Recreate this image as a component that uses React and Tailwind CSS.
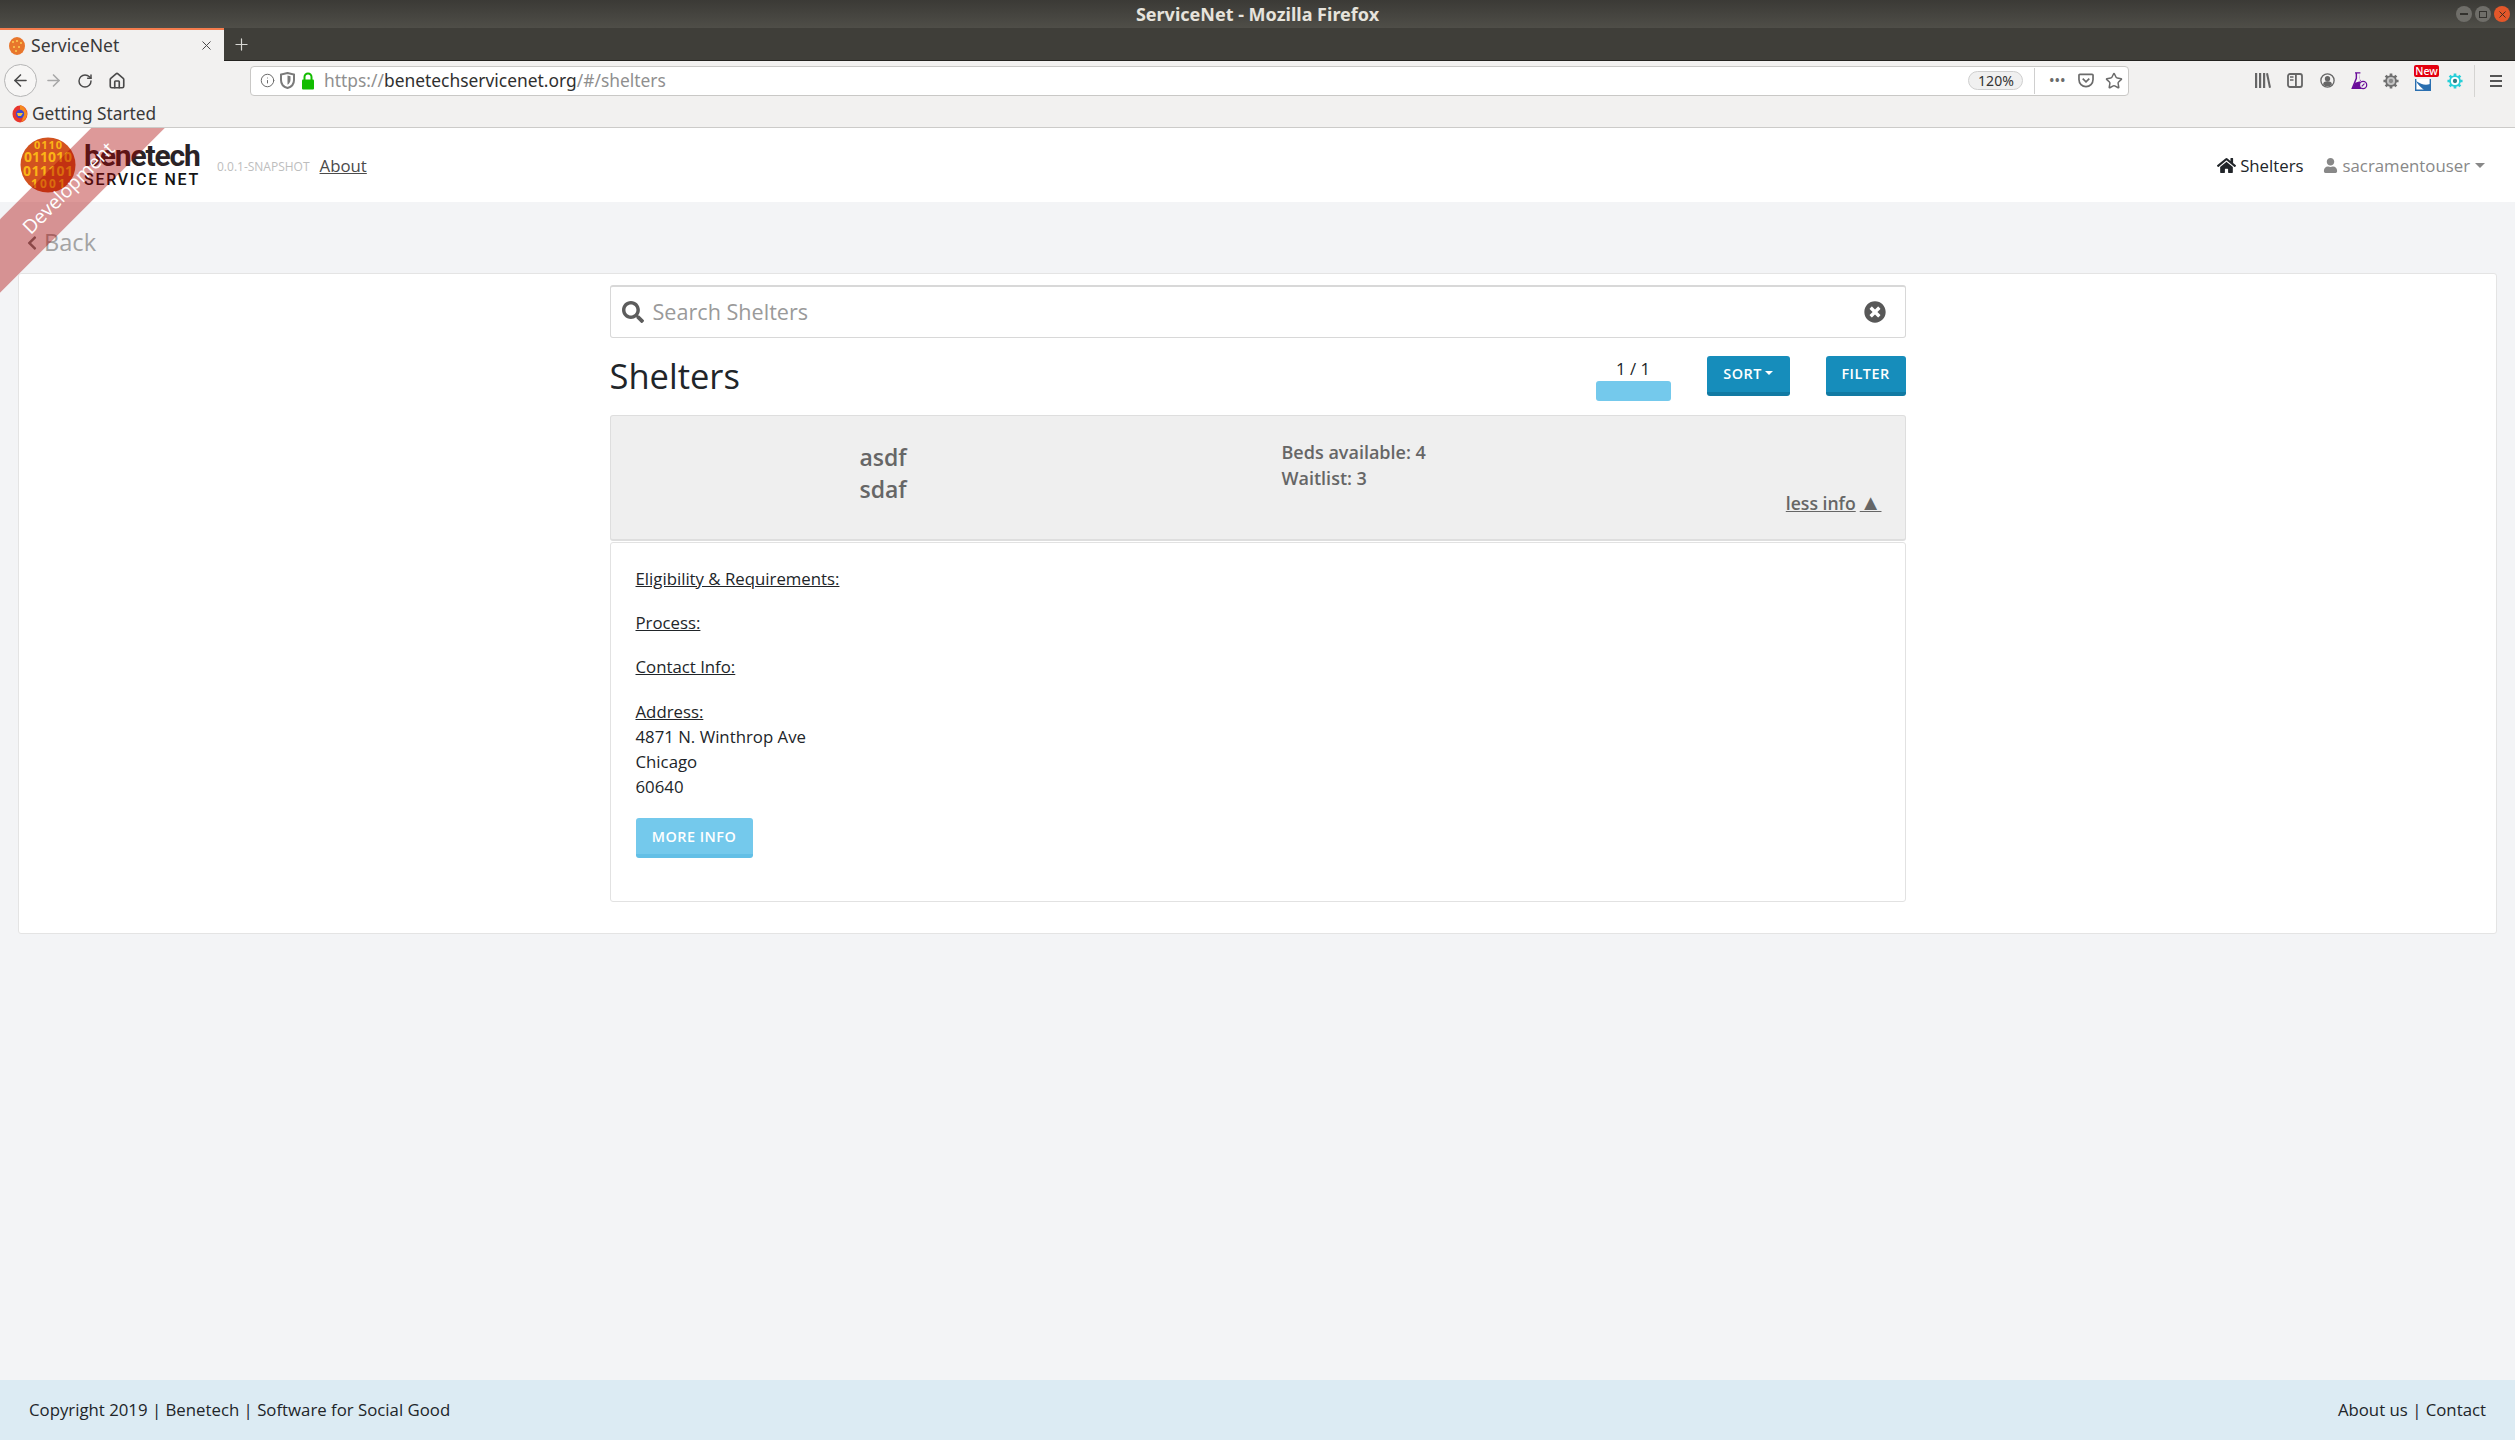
import { FaHome, FaUser, FaSearch, FaTimesCircle, FaChevronLeft } from "react-icons/fa";
import { ArrowLeft, ArrowRight, RotateCw, Home, Info, Star, X, Plus } from "lucide-react";

const Logo = () => (
  <svg width="56" height="56" viewBox="0 0 56 56" className="shrink-0">
    <defs>
      <clipPath id="ball">
        <circle cx="28" cy="28" r="27.5" />
      </clipPath>
    </defs>
    <circle cx="28" cy="28" r="27.5" fill="#d2521f" />
    <g clipPath="url(#ball)" fill="#fbb516" fontFamily="'Open Sans', sans-serif" fontWeight="700">
      <text x="14" y="12" fontSize="11" textLength="28">0110</text>
      <text x="4" y="25" fontSize="14" textLength="48">011010</text>
      <text x="3" y="39" fontSize="14" textLength="50">011101</text>
      <text x="11" y="51" fontSize="12" textLength="34">1001</text>
    </g>
  </svg>
);

const TabIcon = () => (
  <svg width="16" height="18" viewBox="0 0 16 18">
    <ellipse cx="8" cy="9" rx="8" ry="9" fill="#e8762c" />
    <g fill="#f7b84a">
      <rect x="3" y="4" width="2" height="2" />
      <rect x="7" y="3" width="2" height="2" />
      <rect x="11" y="5" width="2" height="2" />
      <rect x="4" y="9" width="2" height="2" />
      <rect x="9" y="9" width="2" height="2" />
      <rect x="6" y="13" width="2" height="2" />
    </g>
  </svg>
);

const FoxIcon = () => (
  <svg width="16" height="19" viewBox="0 0 16 19">
    <ellipse cx="8" cy="10" rx="7.5" ry="8.5" fill="#e8352c" />
    <path d="M8 1 C12 2 15 6 15 10 C15 14 12 17 9 18 C12 14 11 9 8 8 Z" fill="#f58a1f" />
    <circle cx="8" cy="10" r="4.2" fill="#3f47d0" />
    <path d="M5 9 L11 9 L9 12 L6 12 Z" fill="#f9c22e" />
  </svg>
);

const Shield = () => (
  <svg width="15" height="17" viewBox="0 0 15 17">
    <path d="M7.5 1 L14 2.5 V8 C14 12 11 15 7.5 16 C4 15 1 12 1 8 V2.5 Z" fill="none" stroke="#7a7a7a" strokeWidth="2" />
    <path d="M7.5 3.5 L10.5 4.3 V8 C10.5 10 9 12 7.5 12.8 Z" fill="#7a7a7a" />
  </svg>
);

const GreenLock = () => (
  <svg width="14" height="18" viewBox="0 0 14 18">
    <path d="M3.5 8 V5 a3.5 3.5 0 0 1 7 0 V8" fill="none" stroke="#12bc00" strokeWidth="2" />
    <rect x="1" y="7.5" width="12" height="10" rx="1" fill="#12bc00" />
  </svg>
);

const Pocket = () => (
  <svg width="16" height="15" viewBox="0 0 17 16">
    <path d="M2 1.5 H15 a1 1 0 0 1 1 1 V7 a7.5 7.5 0 0 1 -15 0 V2.5 a1 1 0 0 1 1 -1 Z" fill="none" stroke="#6b6b6b" strokeWidth="1.8" />
    <path d="M5 6 L8.5 9.5 L12 6" fill="none" stroke="#6b6b6b" strokeWidth="1.8" />
  </svg>
);

const Library = () => (
  <svg width="16" height="15" viewBox="0 0 16 15" fill="#666">
    <rect x="0" y="0" width="2.2" height="15" />
    <rect x="4" y="0" width="2.2" height="15" />
    <rect x="8" y="0" width="2.2" height="15" />
    <path d="M11 0.5 L13 0 L16 14.5 L14 15 Z" />
  </svg>
);

const Sidebar = () => (
  <svg width="16" height="15" viewBox="0 0 16 15">
    <rect x="1" y="1" width="14" height="13" rx="2" fill="none" stroke="#666" strokeWidth="1.8" />
    <rect x="8" y="1" width="1.8" height="13" fill="#666" />
    <path d="M3 4 H6.5 M3 7 H6.5" stroke="#666" strokeWidth="1.3" />
  </svg>
);

const Account = () => (
  <svg width="15" height="15" viewBox="0 0 17 17">
    <circle cx="8.5" cy="8.5" r="7.5" fill="none" stroke="#666" strokeWidth="1.5" />
    <circle cx="8.5" cy="6.5" r="3" fill="#666" />
    <path d="M3.5 13 a5 3.6 0 0 1 10 0 a7 7 0 0 1 -10 0 Z" fill="#666" />
  </svg>
);

const Flask = () => (
  <svg width="17" height="18" viewBox="0 0 18 20">
    <path d="M4 1 H10 M5.5 1 V7 L1 18 H11" fill="none" stroke="#6a0d9a" strokeWidth="1.6" />
    <path d="M9 1 V7 L10.5 10 L4 12 L1 18 H10 Z" fill="#6a0d9a" />
    <circle cx="13" cy="14.5" r="4" fill="#f2f1f0" stroke="#6a0d9a" strokeWidth="1.4" />
    <path d="M11.5 16 L14.5 13" stroke="#6a0d9a" strokeWidth="1.2" />
  </svg>
);

const Gear = ({ color, inner, hub }) => (
  <svg width="16" height="16" viewBox="0 0 18 18">
    <circle cx="9" cy="9" r="6.6" fill={color} />
    <g stroke={color} strokeWidth="3">
      <path d="M9 0.5 V17.5 M0.5 9 H17.5 M3 3 L15 15 M15 3 L3 15" />
    </g>
    <circle cx="9" cy="9" r="4.6" fill={inner} />
    <circle cx="9" cy="9" r="2.4" fill={hub} />
  </svg>
);

const SiteIcon = () => (
  <div className="relative w-[16px] h-[20px]">
    <svg width="16" height="20" viewBox="0 0 16 20" className="absolute left-0 top-0">
      <path d="M0.7 8 V19.3 H15.3 V8" fill="#fff" stroke="#2a6fb0" strokeWidth="1.4" />
      <path d="M1 10 C6 13 10 15 15 13 V19 H9 C6 16 3 14 1 10 Z" fill="#2a6fb0" />
    </svg>
    <span className="absolute left-[-1px] top-[-6px] w-[25px] text-center rounded-[2px] bg-[#e3000f] text-white text-[10.5px] leading-[12px] font-medium">
      New
    </span>
  </div>
);

const WindowButtons = () => (
  <div className="flex items-center gap-[3px] mr-[5px]">
    <span className="w-[16px] h-[16px] rounded-full bg-[#6f6e69] flex items-center justify-center">
      <span className="w-[8px] h-[2px] bg-[#33322e]" />
    </span>
    <span className="w-[16px] h-[16px] rounded-full bg-[#6f6e69] flex items-center justify-center">
      <span className="w-[8px] h-[7px] border border-[#33322e]" />
    </span>
    <span className="w-[16px] h-[16px] rounded-full bg-[#e4572a] flex items-center justify-center">
      <X size={11} strokeWidth={2} className="text-[#3a2a20]" />
    </span>
  </div>
);

const ToolCell = ({ children }) => (
  <span className="w-[32px] flex justify-center">{children}</span>
);

const BrowserChrome = () => (
  <div className="font-['Noto_Sans',sans-serif]">
    <div className="relative h-[28px] flex items-center justify-end bg-gradient-to-b from-[#3b3a36] to-[#4f4e48]">
      <span className="absolute inset-x-0 text-center text-[18px] leading-[28px] font-bold text-[#e6e3dc]">ServiceNet - Mozilla Firefox</span>
      <WindowButtons />
    </div>
    <div className="h-[33px] flex bg-[#3f3e39] border-b border-[#23221f]">
      <div className="w-[224px] h-[33px] bg-[#f2f1f0] border-t-2 border-[#f57c4d] flex items-center pl-[9px] pr-[10px]">
        <TabIcon />
        <span className="ml-[6px] text-[17.6px] text-[#3a3a3a]">ServiceNet</span>
        <X size={15} strokeWidth={1.6} className="ml-auto text-[#4a4a4a]" />
      </div>
      <div className="flex items-center pl-[8px]">
        <Plus size={19} strokeWidth={1.5} className="text-[#d8d8d4]" />
      </div>
    </div>
    <div className="h-[39px] bg-[#f2f1f0] flex items-center">
      <div className="w-[33px] h-[33px] ml-[4px] rounded-full border border-[#b5b5b5] bg-[#f7f6f5] flex items-center justify-center shrink-0">
        <ArrowLeft size={19} strokeWidth={2} className="text-[#4a4a4a]" />
      </div>
      <ArrowRight size={19} strokeWidth={2} className="ml-[7px] text-[#a8a8a8] shrink-0" />
      <RotateCw size={16} strokeWidth={2.2} className="ml-[14px] text-[#4a4a4a] shrink-0" />
      <Home size={18} strokeWidth={2.2} className="ml-[15px] text-[#4a4a4a] shrink-0" />
      <div className="ml-[124px] w-[1879px] h-[30px] bg-white border border-[#c9c8c6] rounded-[4px] flex items-center pl-[9px] pr-[5px] shrink-0">
        <Info size={15} strokeWidth={1.6} className="text-[#6b6b6b]" />
        <span className="ml-[5px] flex"><Shield /></span>
        <span className="ml-[6px] flex"><GreenLock /></span>
        <span className="ml-[9px] text-[17.4px] text-[#8f8f8f]">
          https://<span className="text-[#2f2f2f]">benetechservicenet.org</span>/#/shelters
        </span>
        <span className="ml-auto h-[19px] w-[55px] rounded-full border border-[#cfcfcf] bg-[#f0f0f0] text-[14px] leading-[17px] text-center text-[#333]">120%</span>
        <span className="ml-[11px] w-px h-[26px] bg-[#cfcfcf]" />
        <span className="ml-[14px] text-[#6b6b6b] text-[12px] font-bold leading-none tracking-[1px]">•••</span>
        <span className="ml-[12px] flex"><Pocket /></span>
        <Star size={18} strokeWidth={2} className="ml-[11px] text-[#6b6b6b]" />
      </div>
      <div className="flex items-center ml-[118px] shrink-0">
        <ToolCell><Library /></ToolCell>
        <ToolCell><Sidebar /></ToolCell>
        <ToolCell><Account /></ToolCell>
        <ToolCell><Flask /></ToolCell>
        <ToolCell><Gear color="#707070" inner="#c4c4c4" hub="#8a8a8a" /></ToolCell>
        <ToolCell><SiteIcon /></ToolCell>
        <ToolCell><Gear color="#28cfd8" inner="#fff" hub="#2f7f86" /></ToolCell>
        <span className="ml-[3px] w-px h-[32px] bg-[#d5d4d2]" />
        <span className="ml-[15px] flex flex-col gap-[3px]">
          <span className="w-[12px] h-[2px] bg-[#555]" />
          <span className="w-[12px] h-[2px] bg-[#555]" />
          <span className="w-[12px] h-[2px] bg-[#555]" />
        </span>
      </div>
    </div>
    <div className="h-[28px] bg-[#f2f1f0] border-b border-[#cccbc9] flex items-center pl-[12px]">
      <FoxIcon />
      <span className="ml-[4px] text-[17.3px] text-[#3a3a3a]">Getting Started</span>
    </div>
  </div>
);

const Ribbon = () => (
  <div className="absolute left-0 top-[128px] w-[200px] h-[200px] overflow-hidden pointer-events-none">
    <div className="absolute left-[-86px] top-[38px] w-[300px] h-[52px] -rotate-45 bg-[#aa0000]/40 flex items-center justify-center text-white text-[19.2px]">
      <span className="ml-[12px]">Development</span>
    </div>
  </div>
);

const Header = () => (
  <div className="h-[74px] bg-white flex items-center pl-[20px] pr-[30px]">
    <Logo />
    <div className="ml-[8px] mb-[2px] w-[116px] flex flex-col">
      <span className="font-['Roboto',sans-serif] font-bold text-[30px] leading-[30px] tracking-[-1.15px] text-[#2a2326]">benetech</span>
      <span className="font-['Roboto',sans-serif] font-medium text-[16px] leading-[17px] tracking-[1.7px] text-[#141414] whitespace-nowrap">SERVICE NET</span>
    </div>
    <span className="ml-[17px] mt-[3px] text-[12px] text-[#bdbdbd]">0.0.1-SNAPSHOT</span>
    <a className="ml-[10px] mt-px underline text-[#4a4a4a]">About</a>
    <div className="ml-auto mt-px flex items-center">
      <FaHome size={19} className="text-[#212529]" />
      <span className="ml-[4px] text-[#212529]">Shelters</span>
      <FaUser size={15} className="ml-[19px] text-[#888]" />
      <span className="ml-[5px] text-[#888]">sacramentouser</span>
      <span className="ml-[5px] border-x-[5px] border-x-transparent border-t-[5px] border-t-[#888]" />
    </div>
  </div>
);

const Controls = () => (
  <div className="mt-[18px] h-[59px] flex items-start">
    <h1 className="text-[34.5px] leading-[40px] text-[#212529]">Shelters</h1>
    <div className="ml-auto w-[75px] flex flex-col items-center">
      <span className="h-[25px] leading-[25px] text-[#212529]">1 / 1</span>
      <span className="w-[75px] h-[20px] rounded-[3px] bg-[#74c9ec]" />
    </div>
    <button className="ml-[36px] w-[83px] h-[40px] rounded-[3px] bg-[#168dbb] border-b-[4px] border-[#117aa3] text-white text-[14.4px] font-semibold tracking-[0.5px] flex items-center justify-center">
      SORT
      <span className="ml-[3px] mb-[2px] border-x-[4px] border-x-transparent border-t-[4px] border-t-white" />
    </button>
    <button className="ml-[36px] w-[80px] h-[40px] rounded-[3px] bg-[#168dbb] border-b-[4px] border-[#117aa3] text-white text-[14.4px] font-semibold tracking-[0.5px]">
      FILTER
    </button>
  </div>
);

const CardHead = () => (
  <div className="h-[126px] flex bg-[#efefef] border border-[#dedede] border-b-2 rounded-[3px] text-[#666]">
    <div className="ml-[249px] w-[422px] pt-[25px] text-[23px] leading-[32px] font-semibold">
      <div>asdf</div>
      <div>sdaf</div>
    </div>
    <div className="pt-[23px] text-[18px] leading-[26px] font-semibold">
      <div>Beds available: 4</div>
      <div>Waitlist: 3</div>
    </div>
    <a className="ml-auto self-end mr-[23px] mb-[23px] text-[17.6px] leading-[25px] font-semibold underline">
      less info<span className="ml-[4px] text-[22px] leading-[20px]">▲</span>
    </a>
  </div>
);

const Details = () => (
  <div className="mt-px h-[360px] bg-white border border-[#e2e2e2] rounded-[3px] pl-[25px] pt-[23px] text-[#212529]">
    <p className="underline mb-[19px]">Eligibility &amp; Requirements:</p>
    <p className="underline mb-[19px]">Process:</p>
    <p className="underline mb-[19px]">Contact Info:</p>
    <p className="underline">Address:</p>
    <p>4871 N. Winthrop Ave</p>
    <p>Chicago</p>
    <p>60640</p>
    <button className="mt-[19px] w-[117px] h-[40px] rounded-[3px] bg-[#74c9ec] border-b-[4px] border-[#62bfe6] text-white text-[14.4px] font-semibold tracking-[0.5px]">
      MORE INFO
    </button>
  </div>
);

const App = () => (
  <div className="relative min-h-[1440px] flex flex-col bg-[#f3f4f6] text-[16.8px] leading-[25.2px] font-['Open_Sans',sans-serif]">
    <BrowserChrome />
    <Header />
    <div className="h-[71px] pl-[24px] pt-[10px] flex items-center text-[#a3a3a3] text-[23.6px]">
      <FaChevronLeft size={16} className="text-[#777]" />
      <span className="ml-[4px]">Back</span>
    </div>
    <div className="mx-[18px] h-[661px] bg-white border border-[#e4e4e4] rounded-[3px] pt-[11px]">
      <div className="w-[1296px] mx-auto">
        <div className="h-[53px] flex items-center border border-[#d8d8d8] border-t-2 rounded-[3px] pl-[11px] pr-[19px]">
          <FaSearch size={22} className="text-[#5c5c5c]" />
          <span className="ml-[9px] text-[21.6px] text-[#9a9a9a]">Search Shelters</span>
          <FaTimesCircle size={22} className="ml-auto text-[#585858]" />
        </div>
        <Controls />
        <CardHead />
        <Details />
      </div>
    </div>
    <div className="mt-auto h-[60px] bg-[#dcebf3] flex items-center justify-between pl-[29px] pr-[29px] text-[#212529]">
      <span>Copyright 2019 | Benetech | Software for Social Good</span>
      <span>About us | Contact</span>
    </div>
    <Ribbon />
  </div>
);

export default App;
